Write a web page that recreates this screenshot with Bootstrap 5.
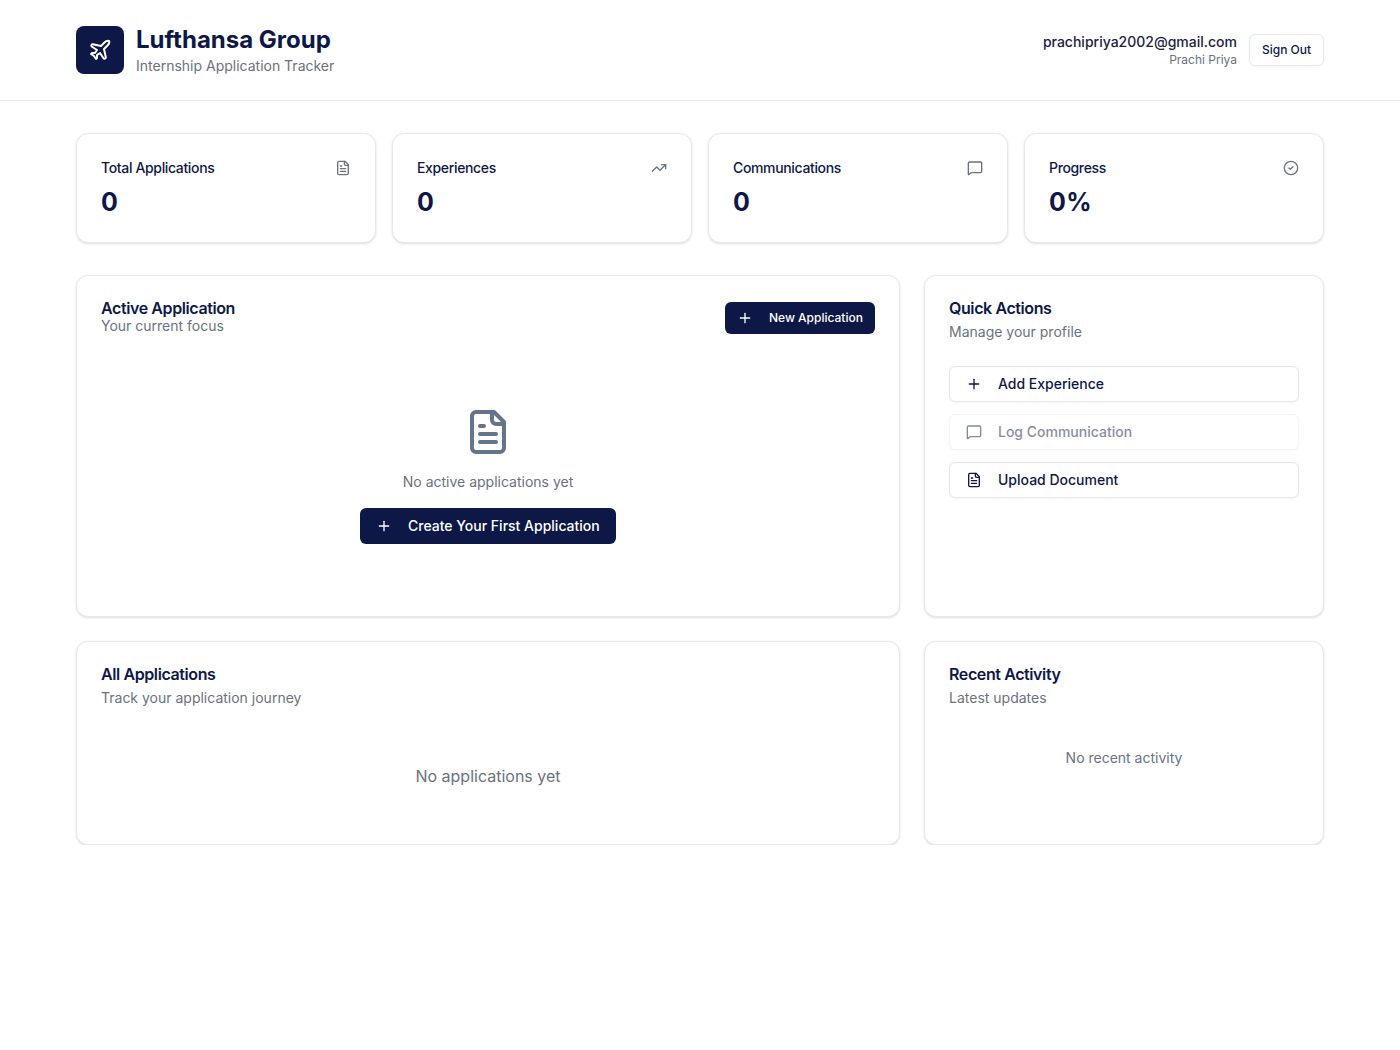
<!DOCTYPE html>
<html lang="en">
<head>
  <meta charset="UTF-8">
  <meta name="viewport" content="width=device-width, initial-scale=1">
  <title>Lufthansa Group - Internship Application Tracker</title>
  <link href="https://cdn.jsdelivr.net/npm/bootstrap@5.3.0/dist/css/bootstrap.min.css" rel="stylesheet">
  <style>
    body { font-family: Inter, "Liberation Sans", sans-serif; background: #fff; color: #0d1847; }
    svg.ico { fill: none; stroke: currentColor; stroke-width: 2; stroke-linecap: round; stroke-linejoin: round; flex-shrink: 0; }
    .top-bar { height: 101px; border-bottom: 1px solid #e5e8ec; }
    .wrap { max-width: 1280px; margin: 0 auto; padding: 0 16px; }
    .top-bar .wrap { height: 100px; }
    .logo-box { width: 48px; height: 48px; border-radius: 8px; background: #0d1847; color: #fff; }
    .brand-name { font-size: 24px; line-height: 32px; font-weight: 700; margin: 0; color: #0d1847; }
    .brand-sub { font-size: 14px; line-height: 20px; color: #6b7280; }
    .user-mail { font-size: 14px; line-height: 20px; font-weight: 500; color: #1a2340; }
    .user-name { font-size: 12px; line-height: 16px; color: #6b7280; }
    .signout-btn { height: 32px; width: 75px; padding: 0; font-size: 12px; font-weight: 500; color: #0d1847; background: #fff; border: 1px solid #e5e8ec; border-radius: 6px; box-shadow: 0 1px 2px rgba(0,0,0,.03); }
    .page-body { padding-top: 32px; }
    .tile { background: #fff; border: 1px solid #e5e8ec; border-radius: 12px; box-shadow: 0 1px 3px rgba(0,0,0,.1), 0 1px 2px -1px rgba(0,0,0,.1); }
    .stat-grid { display: grid; grid-template-columns: repeat(4, 1fr); gap: 16px; margin-bottom: 32px; }
    .stat-tile { height: 110px; padding: 24px; }
    .stat-label { font-size: 14px; line-height: 20px; font-weight: 500; color: #0d1847; letter-spacing: -.35px; }
    .stat-num { font-size: 25px; line-height: 32px; font-weight: 700; margin-top: 8px; color: #0d1847; letter-spacing: .3px; }
    .stat-ico { color: #6b7280; }
    .main-grid { display: grid; grid-template-columns: 824px 400px; gap: 24px; }
    .tall-tile { height: 342px; padding: 24px; }
    .short-tile { height: 204px; padding: 24px; }
    .tile-title { font-size: 16px; line-height: 16px; font-weight: 600; color: #0d1847; margin: 0; letter-spacing: -.4px; }
    .tile-sub { font-size: 14px; line-height: 20px; color: #6b7280; }
    .sub-gap { margin-top: 6px; }
    .navy-btn { background: #0d1847; color: #fff; border: 0; border-radius: 6px; font-weight: 500; display: flex; align-items: center; }
    .navy-btn:hover { background: #0d1847; color: #fff; }
    .new-btn { height: 32px; width: 150px; font-size: 12px; padding: 0 12px; gap: 16px; }
    .first-btn { height: 36px; width: 256px; font-size: 14px; line-height: 20px; padding: 0 16px 1px; gap: 16px; }
    .empty-note { font-size: 14px; line-height: 20px; color: #6b7280; margin: 0; }
    .empty-big { font-size: 16px; line-height: 24px; color: #6b7280; }
    .quick-btn { height: 36px; width: 100%; background: #fff; border: 1px solid #e5e8ec; border-radius: 6px; font-size: 14px; line-height: 20px; font-weight: 500; color: #0d1847; display: flex; align-items: center; gap: 16px; padding: 0 16px; box-shadow: 0 1px 2px rgba(0,0,0,.04); }
    .quick-btn.is-off { opacity: .5; }
    .empty-block { margin-top: 72px; }
    .empty-ico { color: #64748b; margin-bottom: 16px; }
    .empty-block .empty-note { margin-bottom: 16px; }
    .quick-list { margin-top: 24px; gap: 12px; }
    .all-empty { margin-top: 56px; }
    .recent-empty { margin-top: 40px; }
  </style>
</head>
<body>
  <svg width="0" height="0" class="position-absolute">
    <symbol id="i-plane" viewBox="0 0 24 24"><path d="M17.8 19.2 16 11l3.5-3.5C21 6 21.5 4 21 3c-1-.5-3 0-4.5 1.5L13 8 4.8 6.2c-.5-.1-.9.1-1.1.5l-.3.5c-.2.5-.1 1 .3 1.3L9 12l-2 3H4l-1 1 3 2 2 3 1-1v-3l3-2 3.5 5.3c.3.4.8.5 1.3.3l.5-.2c.4-.3.6-.7.5-1.2z"/></symbol>
    <symbol id="i-file" viewBox="0 0 24 24"><path d="M15 2H6a2 2 0 0 0-2 2v16a2 2 0 0 0 2 2h12a2 2 0 0 0 2-2V7Z"/><path d="M14 2v4a2 2 0 0 0 2 2h4"/><path d="M10 9H8"/><path d="M16 13H8"/><path d="M16 17H8"/></symbol>
    <symbol id="i-trend" viewBox="0 0 24 24"><polyline points="22 7 13.5 15.5 8.5 10.5 2 17"/><polyline points="16 7 22 7 22 13"/></symbol>
    <symbol id="i-msg" viewBox="0 0 24 24"><path d="M22 17a2 2 0 0 1-2 2H6.828a2 2 0 0 0-1.414.586l-2.202 2.202A.71.71 0 0 1 2 21.286V5a2 2 0 0 1 2-2h16a2 2 0 0 1 2 2z"/></symbol>
    <symbol id="i-check" viewBox="0 0 24 24"><circle cx="12" cy="12" r="10"/><path d="m9 12 2 2 4-4"/></symbol>
    <symbol id="i-plus" viewBox="0 0 24 24"><path d="M5 12h14"/><path d="M12 5v14"/></symbol>
  </svg>

  <header class="top-bar">
    <div class="wrap d-flex justify-content-between align-items-center">
      <div class="d-flex align-items-center gap-2">
        <div class="logo-box d-flex align-items-center justify-content-center me-1">
          <svg class="ico" width="24" height="24"><use href="#i-plane"/></svg>
        </div>
        <div>
          <h1 class="brand-name">Lufthansa Group</h1>
          <div class="brand-sub">Internship Application Tracker</div>
        </div>
      </div>
      <div class="d-flex align-items-center gap-2">
        <div class="text-end me-1">
          <div class="user-mail">prachipriya2002@gmail.com</div>
          <div class="user-name">Prachi Priya</div>
        </div>
        <button class="signout-btn" type="button">Sign Out</button>
      </div>
    </div>
  </header>

  <main class="wrap page-body">
    <div class="stat-grid">
      <div class="tile stat-tile">
        <div class="d-flex justify-content-between align-items-center">
          <span class="stat-label">Total Applications</span>
          <svg class="ico stat-ico" width="16" height="16"><use href="#i-file"/></svg>
        </div>
        <div class="stat-num">0</div>
      </div>
      <div class="tile stat-tile">
        <div class="d-flex justify-content-between align-items-center">
          <span class="stat-label">Experiences</span>
          <svg class="ico stat-ico" width="16" height="16"><use href="#i-trend"/></svg>
        </div>
        <div class="stat-num">0</div>
      </div>
      <div class="tile stat-tile">
        <div class="d-flex justify-content-between align-items-center">
          <span class="stat-label">Communications</span>
          <svg class="ico stat-ico" width="16" height="16"><use href="#i-msg"/></svg>
        </div>
        <div class="stat-num">0</div>
      </div>
      <div class="tile stat-tile">
        <div class="d-flex justify-content-between align-items-center">
          <span class="stat-label">Progress</span>
          <svg class="ico stat-ico" width="16" height="16"><use href="#i-check"/></svg>
        </div>
        <div class="stat-num">0%</div>
      </div>
    </div>

    <div class="main-grid">
      <section class="tile tall-tile d-flex flex-column">
        <div class="d-flex justify-content-between align-items-center">
          <div>
            <h2 class="tile-title">Active Application</h2>
            <div class="tile-sub">Your current focus</div>
          </div>
          <button class="navy-btn new-btn" type="button">
            <svg class="ico" width="16" height="16"><use href="#i-plus"/></svg>
            New Application
          </button>
        </div>
        <div class="d-flex flex-column align-items-center empty-block">
          <svg class="ico empty-ico" width="48" height="48"><use href="#i-file"/></svg>
          <p class="empty-note">No active applications yet</p>
          <button class="navy-btn first-btn" type="button">
            <svg class="ico" width="16" height="16"><use href="#i-plus"/></svg>
            Create Your First Application
          </button>
        </div>
      </section>

      <section class="tile tall-tile">
        <h2 class="tile-title">Quick Actions</h2>
        <div class="tile-sub sub-gap">Manage your profile</div>
        <div class="d-flex flex-column quick-list">
          <button class="quick-btn" type="button"><svg class="ico" width="16" height="16"><use href="#i-plus"/></svg>Add Experience</button>
          <button class="quick-btn is-off" type="button"><svg class="ico" width="16" height="16"><use href="#i-msg"/></svg>Log Communication</button>
          <button class="quick-btn" type="button"><svg class="ico" width="16" height="16"><use href="#i-file"/></svg>Upload Document</button>
        </div>
      </section>

      <section class="tile short-tile">
        <h2 class="tile-title">All Applications</h2>
        <div class="tile-sub sub-gap">Track your application journey</div>
        <div class="empty-big text-center all-empty">No applications yet</div>
      </section>

      <section class="tile short-tile">
        <h2 class="tile-title">Recent Activity</h2>
        <div class="tile-sub sub-gap">Latest updates</div>
        <div class="empty-note text-center recent-empty">No recent activity</div>
      </section>
    </div>
  </main>

  <script src="https://cdn.jsdelivr.net/npm/bootstrap@5.3.0/dist/js/bootstrap.bundle.min.js"></script>
</body>
</html>
